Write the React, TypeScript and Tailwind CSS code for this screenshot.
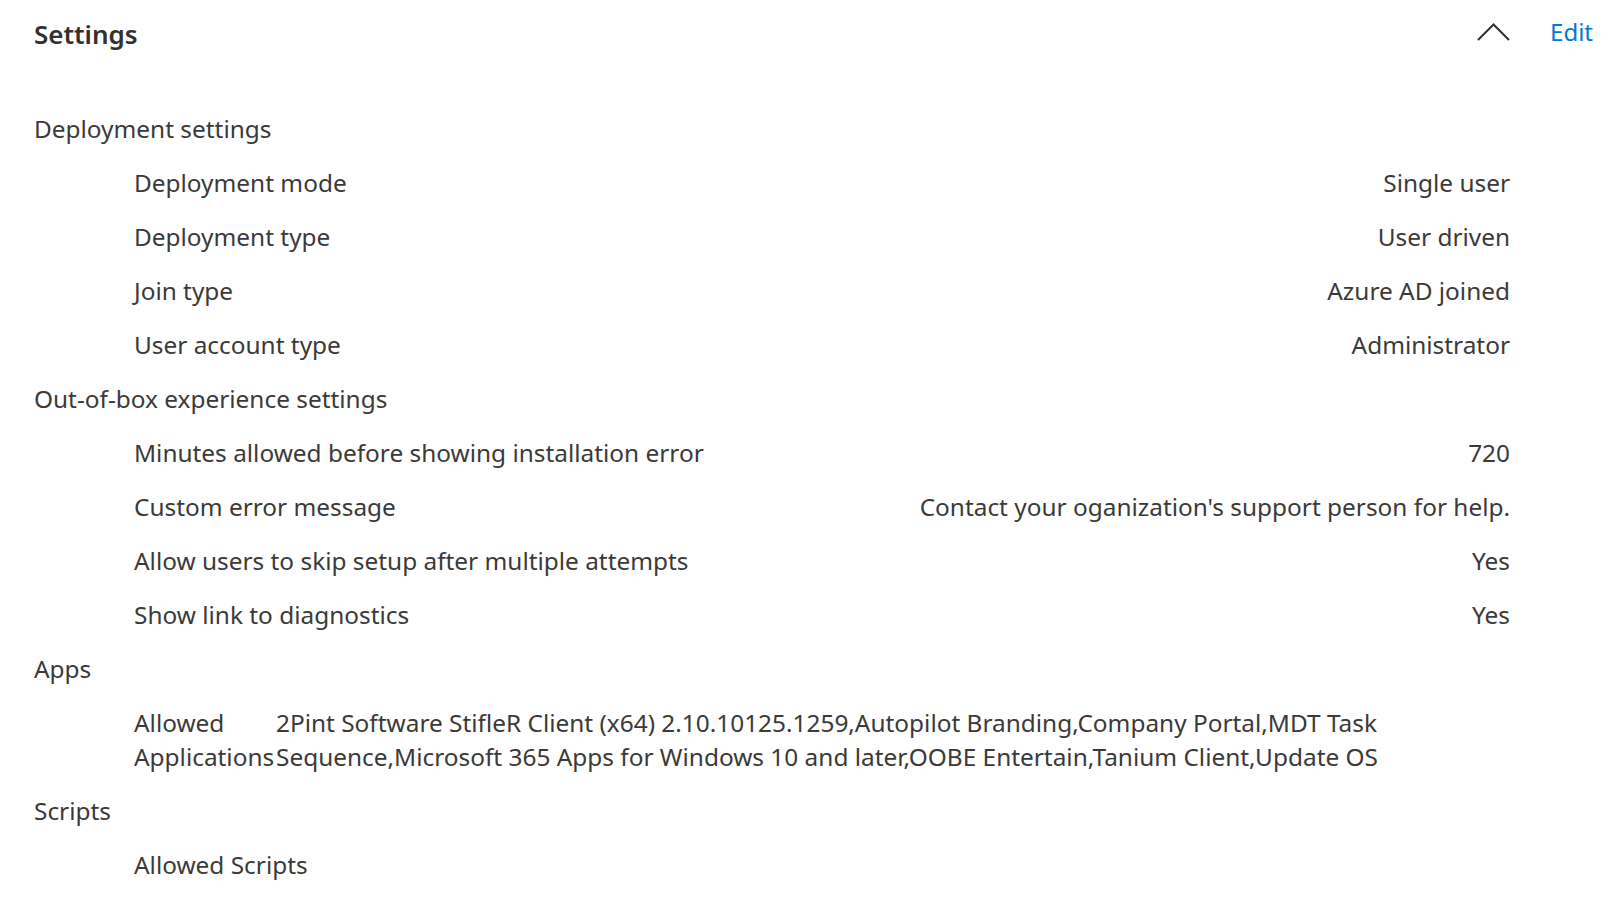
const font = { fontFamily: '"Noto Sans", "Open Sans", sans-serif' };

interface Row {
  label: string;
  value?: string;
}

interface Section {
  title: string;
  rows: Row[];
}

const sections: Section[] = [
  {
    title: "Deployment settings",
    rows: [
      { label: "Deployment mode", value: "Single user" },
      { label: "Deployment type", value: "User driven" },
      { label: "Join type", value: "Azure AD joined" },
      { label: "User account type", value: "Administrator" },
    ],
  },
  {
    title: "Out-of-box experience settings",
    rows: [
      { label: "Minutes allowed before showing installation error", value: "720" },
      { label: "Custom error message", value: "Contact your oganization's support person for help." },
      { label: "Allow users to skip setup after multiple attempts", value: "Yes" },
      { label: "Show link to diagnostics", value: "Yes" },
    ],
  },
];

export default function App() {
  return (
    <div className="w-[1620px] h-[910px] bg-white text-[#3b3a39] text-[24.4px] overflow-hidden" style={font}>
      {/* Header */}
      <div className="flex items-center h-[69px] pl-[34px] pr-[27px]">
        <span className="text-[26px] font-semibold text-[#323130] flex-1">Settings</span>
        <svg width="33" height="18" viewBox="0 0 33 18" className="mr-[40px] -mt-[6px]">
          <polyline points="1,17 16.5,1.5 32,17" fill="none" stroke="#323130" strokeWidth="2" />
        </svg>
        <span className="text-[#0078d4] text-[24px] -mt-[6px]">Edit</span>
      </div>

      <div className="pl-[34px] w-[1510px] mt-[33px]">
        {sections.map(section => (
          <div key={section.title}>
            <div className="h-[54px] flex items-center">{section.title}</div>
            {section.rows.map(row => (
              <div key={row.label} className="h-[54px] flex items-center justify-between pl-[100px]">
                <span>{row.label}</span>
                <span>{row.value}</span>
              </div>
            ))}
          </div>
        ))}

        {/* Apps */}
        <div className="h-[54px] flex items-center">Apps</div>
        <div className="flex pl-[100px] pt-[10px] pb-[10px] leading-[34px]">
          <div className="w-[142px] shrink-0">Allowed Applications</div>
          <div className="w-[1234px]">
            2Pint Software StifleR Client (x64) 2.10.10125.1259,Autopilot Branding,Company Portal,MDT Task Sequence,Microsoft 365 Apps for Windows 10 and later,OOBE Entertain,Tanium Client,Update OS
          </div>
        </div>

        {/* Scripts */}
        <div className="h-[54px] flex items-center">Scripts</div>
        <div className="h-[54px] flex items-center pl-[100px]">Allowed Scripts</div>
      </div>
    </div>
  );
}
